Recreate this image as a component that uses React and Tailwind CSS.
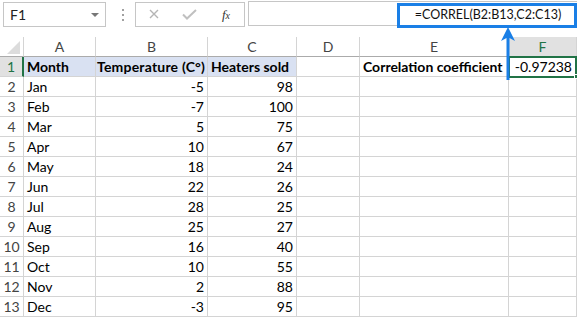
import * as React from 'react';

const cols = [
  { w: 'w-[72px]', label: 'A' },
  { w: 'w-[112px]', label: 'B' },
  { w: 'w-[89px]', label: 'C' },
  { w: 'w-[63px]', label: 'D' },
  { w: 'w-[149px]', label: 'E' },
  { w: 'w-[68px]', label: 'F' },
];

const data = [
  ['Jan', -5, 98],
  ['Feb', -7, 100],
  ['Mar', 5, 75],
  ['Apr', 10, 67],
  ['May', 18, 24],
  ['Jun', 22, 26],
  ['Jul', 28, 25],
  ['Aug', 25, 27],
  ['Sep', 16, 40],
  ['Oct', 10, 55],
  ['Nov', 2, 88],
  ['Dec', -3, 95],
];

const cell = 'h-[20px] shrink-0 border-r border-b border-[#d4d4d4] flex items-center overflow-visible whitespace-nowrap';

function App() {
  return (
    <div className="relative w-[577px] h-[318px] bg-white overflow-hidden text-[14px] text-black" style={{ fontFamily: 'Lato, "Open Sans", sans-serif' }}>
      {/* formula bar */}
      <div className="flex h-[37px] pt-[2px] pl-[3px]">
        <div className="w-[103px] h-[25px] border border-[#c6c6c6] flex items-center justify-between px-[6px]">
          <span className="text-[14px] text-[#222]">F1</span>
          <span className="w-0 h-0 border-l-[4px] border-r-[4px] border-t-[4px] border-l-transparent border-r-transparent border-t-[#777]" />
        </div>
        <div className="w-[29px] flex flex-col items-center justify-center gap-[3px] h-[25px] pl-[4px]">
          <span className="w-[2px] h-[2px] bg-[#a0a0a0]" />
          <span className="w-[2px] h-[2px] bg-[#a0a0a0]" />
          <span className="w-[2px] h-[2px] bg-[#a0a0a0]" />
        </div>
        <div className="w-[110px] h-[25px] border border-[#c6c6c6] flex items-center">
          <svg width="36" height="25" viewBox="0 0 36 25" className="shrink-0">
            <path d="M14 8 L22 16 M22 8 L14 16" stroke="#b5b5b5" strokeWidth="1.4" fill="none" />
          </svg>
          <svg width="36" height="25" viewBox="0 0 36 25" className="shrink-0">
            <path d="M11 12.5 L15 16.5 L24 8" stroke="#c0c0c0" strokeWidth="2" fill="none" />
          </svg>
          <span className="w-[36px] text-center italic text-[13px] text-[#333]" style={{ fontFamily: '"Liberation Serif", serif' }}>
            f<span className="text-[10px]">x</span>
          </span>
        </div>
        <div className="ml-[3px] flex-1 h-[25px] border border-r-0 border-[#c6c6c6] flex justify-end -mt-px">
          <div className="w-[180px] h-[25px] border-[3px] border-[#1a7fe6] bg-white flex items-center justify-center pl-[2px] text-[12.5px] text-[#111] mt-px">
            =CORREL(B2:B13,C2:C13)
          </div>
        </div>
      </div>

      {/* column headers */}
      <div className="flex">
        <div className="w-[24px] h-[20px] shrink-0 border-r border-b border-[#d4d4d4] border-b-[#ababab] relative">
          <span className="absolute right-[3px] bottom-[2px] w-0 h-0 border-l-[13px] border-b-[13px] border-l-transparent border-b-[#dcdcdc]" />
        </div>
        {cols.map((c) =>
          c.label === 'F' ? (
            <div key={c.label} className={`${c.w} h-[20px] shrink-0 border-r border-b border-[#d4d4d4] border-b-[#ababab] bg-[#e1e1e1] flex items-center justify-center text-[#217346] text-[14px]`}>
              {c.label}
            </div>
          ) : (
            <div key={c.label} className={`${c.w} h-[20px] shrink-0 border-r border-b border-[#d4d4d4] border-b-[#ababab] flex items-center justify-center text-[#444] text-[14px]`}>
              {c.label}
            </div>
          )
        )}
      </div>

      {/* row 1 */}
      <div className="flex">
        <div className={`w-[24px] ${cell} justify-center bg-[#e1e1e1] text-[#217346] border-r-2 border-r-[#217346]`}>1</div>
        <div className={`w-[72px] ${cell} bg-[#d9e1f2] font-bold pl-[3px]`}>Month</div>
        <div className={`w-[112px] ${cell} bg-[#d9e1f2] font-bold pl-[1px] tracking-[0.2px]`}>Temperature (C°)</div>
        <div className={`w-[89px] ${cell} bg-[#d9e1f2] font-bold pl-[3px]`}>Heaters sold</div>
        <div className={`w-[63px] ${cell}`} />
        <div className={`w-[149px] ${cell} font-bold pl-[3px]`}>Correlation coefficient</div>
        <div className={`w-[68px] ${cell} justify-end pr-[4px] relative`}>
          -0.97238
          <span className="absolute -left-px -top-px w-[69px] h-[22px] border-2 border-[#217346]" />
          <span className="absolute -right-[3px] -bottom-[3px] w-[5px] h-[5px] bg-[#217346] border border-white" />
        </div>
      </div>

      {data.map((r, i) => (
        <div key={r[0]} className="flex">
          <div className={`w-[24px] ${cell} justify-center text-[#444]`}>{i + 2}</div>
          <div className={`w-[72px] ${cell} pl-[3px]`}>{r[0]}</div>
          <div className={`w-[112px] ${cell} justify-end pr-[3px]`}>{r[1]}</div>
          <div className={`w-[89px] ${cell} justify-end pr-[3px]`}>{r[2]}</div>
          <div className={`w-[63px] ${cell}`} />
          <div className={`w-[149px] ${cell}`} />
          <div className={`w-[68px] ${cell}`} />
        </div>
      ))}

      {/* blue arrow pointing from cell to formula */}
      <svg className="absolute left-[500px] top-[26px]" width="16" height="56" viewBox="0 0 16 56">
        <path d="M8 1 L15 15 L9.5 12 L9.5 54 L6.5 54 L6.5 12 L1 15 Z" fill="#1a7fe6" />
      </svg>
    </div>
  );
}

export default App;
